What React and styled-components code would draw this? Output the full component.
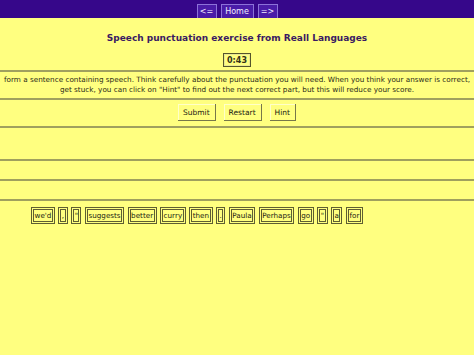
import React from "react";
import styled, { createGlobalStyle } from "styled-components";

const GlobalStyle = createGlobalStyle`
  html, body {
    margin: 0;
    padding: 0;
    background: #ffff80;
  }
  body {
    font-family: "DejaVu Sans", Verdana, sans-serif;
    color: #222211;
    overflow: hidden;
  }
`;

const Page = styled.div`
  width: 474px;
  height: 355px;
  background: #ffff80;
  overflow: hidden;
`;

const NavBar = styled.div`
  height: 18px;
  background: #36078a;
  display: flex;
  justify-content: center;
  align-items: flex-end;
  gap: 4px;
`;

const NavButton = styled.div`
  height: 14px;
  width: ${({ wide }) => (wide ? 33 : 20)}px;
  box-sizing: border-box;
  border: 1px solid #8c72d8;
  border-bottom: none;
  background: #4a1ca8;
  color: #f0ecff;
  font-size: 8px;
  display: flex;
  align-items: center;
  justify-content: center;
`;

const Title = styled.h1`
  margin: 14px 0 0;
  font-size: 9px;
  font-weight: bold;
  color: #3a1a62;
  text-align: center;
  line-height: 12px;
`;

const TimerRow = styled.div`
  display: flex;
  justify-content: center;
  margin-top: 9px;
`;

const Timer = styled.div`
  box-sizing: border-box;
  height: 14px;
  padding: 0 3px;
  border: 1px solid #55552c;
  box-shadow: inset 0 0 0 1px #e8e890;
  font-size: 8px;
  font-weight: bold;
  color: #33331a;
  display: flex;
  align-items: center;
`;

const Instructions = styled.div`
  margin-top: 3px;
  border-top: 2px solid #a0a05e;
  border-bottom: 2px solid #a0a05e;
  height: 26px;
  display: flex;
  flex-direction: column;
  justify-content: center;
  overflow: hidden;
`;

const InstructionLine = styled.div`
  white-space: nowrap;
  text-align: center;
  font-size: 7.25px;
  line-height: 10px;
  color: #2a2a18;
`;

const ButtonRow = styled.div`
  display: flex;
  justify-content: center;
  gap: 8px;
  padding: 4px 0 5px;
  border-bottom: 2px solid #a0a05e;
`;

const Button = styled.button`
  height: 17px;
  padding: 0 5px;
  background: #ffff80;
  border: none;
  border-right: 1px solid #77774a;
  border-bottom: 1px solid #77774a;
  box-shadow: inset 1px 1px 0 #ffffc8;
  font-family: "DejaVu Sans", Verdana, sans-serif;
  font-size: 7.5px;
  color: #222211;
`;

const Blank = styled.div`
  height: ${({ h }) => h}px;
  border-bottom: 2px solid #a0a05e;
`;

const TileRow = styled.div`
  display: flex;
  gap: 3.5px;
  padding: 6px 0 0 31px;
`;

const Tile = styled.div`
  box-sizing: border-box;
  height: 17px;
  min-width: 9px;
  padding: 0 0.5px;
  border: 3px double #5e5e32;
  font-size: 7.2px;
  color: #222211;
  display: flex;
  align-items: center;
  justify-content: center;
`;

const words = ["we'd", ",", "\"", "suggests", "better", "curry", "then", ".", "Paula", "Perhaps", "go", "\"", "a", "for"];

const App = () => (
  <Page>
    <GlobalStyle />
    <NavBar>
      <NavButton>&lt;=</NavButton>
      <NavButton wide>Home</NavButton>
      <NavButton>=&gt;</NavButton>
    </NavBar>
    <Title>Speech punctuation exercise from Reall Languages</Title>
    <TimerRow>
      <Timer>0:43</Timer>
    </TimerRow>
    <Instructions>
      <InstructionLine>
        form a sentence containing speech. Think carefully about the punctuation you will need. When you think your answer is correct,
      </InstructionLine>
      <InstructionLine>
        get stuck, you can click on "Hint" to find out the next correct part, but this will reduce your score.
      </InstructionLine>
    </Instructions>
    <ButtonRow>
      <Button>Submit</Button>
      <Button>Restart</Button>
      <Button>Hint</Button>
    </ButtonRow>
    <Blank h={31} />
    <Blank h={18} />
    <Blank h={18} />
    <TileRow>
      {words.map((w, i) => (
        <Tile key={i}>{w}</Tile>
      ))}
    </TileRow>
  </Page>
);

export default App;
